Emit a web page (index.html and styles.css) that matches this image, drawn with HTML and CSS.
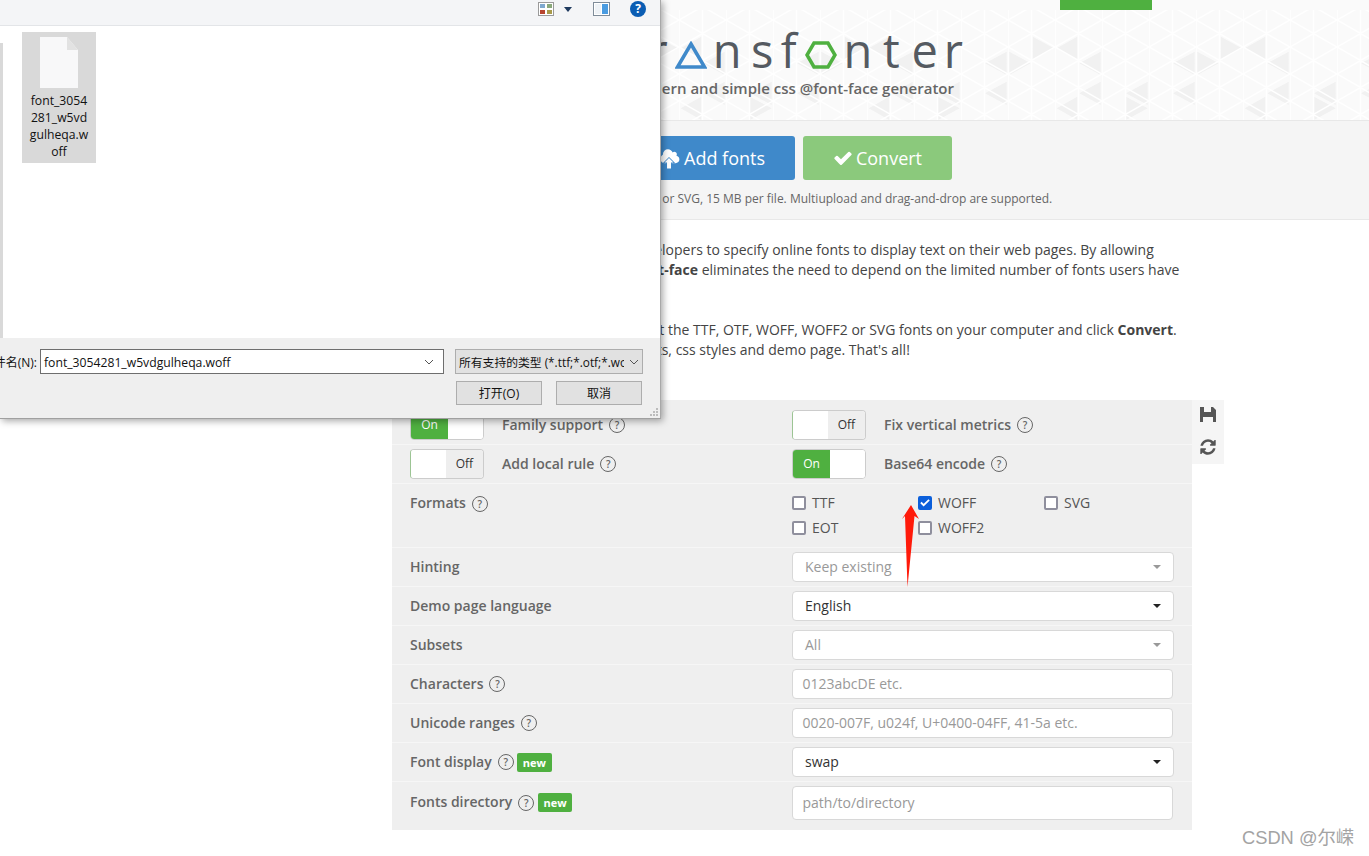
FILE: index.html
```html
<!DOCTYPE html>
<html lang="en">
<head>
<meta charset="utf-8">
<title>Transfonter</title>
<link rel="stylesheet" href="styles.css">
</head>
<body>
<header class="hero">
  <svg class="hero-bg" width="100%" height="120" aria-hidden="true">
    <defs>
      <pattern id="lattice" width="47" height="27" patternUnits="userSpaceOnUse" x="21" y="20">
        <path d="M0 0V27M23.500 0V27M0 0L23.500 13.500L47 0M0 27L23.500 13.500L47 27" fill="none" stroke="#fff" stroke-width="1.500"/>
      </pattern>
      <pattern id="shades" width="188" height="120" patternUnits="userSpaceOnUse" x="960" y="0">
        <path fill="#f1f1f1" d="M25 63.300L46.700 51.700V75ZM49.300 51.700V75L70.700 63.300ZM72.700 36.700V60L94 48.300ZM96.700 48.300L117.300 36.700V60ZM119.300 63.300L140.700 51.700V75ZM25 93.300L46.700 81.700V105ZM96.700 108.300L117.300 96.700V120ZM119.300 93.300L140.700 81.700V105ZM166 93.300L187.700 81.700V105ZM166 96.700V120L187.700 108.300Z"/>
      </pattern>
    </defs>
    <rect width="100%" height="120" fill="url(#shades)"/>
    <rect width="100%" height="120" fill="url(#lattice)"/>
    <rect width="100%" height="10" fill="#fafafa"/>
  </svg>
  <div class="nav-tab"></div>
  <div class="brand">
    <div class="logo">
      <span class="logo-t">t</span><span class="logo-r">r</span>
      <svg class="logo-tri" width="32" height="28" viewBox="0 0 32 28"><path d="M16 3L29.500 26H2.500Z" fill="none" stroke="#3f89ca" stroke-width="3.500"/></svg>
      <span class="logo-n">n</span><span class="logo-s">s</span><span class="logo-f">f</span>
      <svg class="logo-hex" width="32" height="28" viewBox="0 0 32 28"><path d="M9 2H23L30 14L23 26H9L2 14Z" fill="none" stroke="#4fb040" stroke-width="3.500"/></svg>
      <span class="logo-n2">n</span><span class="logo-e-t">t</span><span class="logo-e">e</span><span class="logo-last">r</span>
    </div>
    <p class="tagline">A modern and simple css @font-face generator</p>
  </div>
</header>

<section class="actions">
  <div class="buttons">
    <button class="btn btn-blue">
      <svg class="btn-ico" width="19" height="21" viewBox="0 0 19 21"><g transform="scale(.0099)"><path fill="#fff" d="M1856 1152q0 159-112.500 271.500t-271.500 112.500h-1088q-185 0-316.500-131.500t-131.500-316.500q0-130 70-240t188-165q-2-30-2-43 0-212 150-362t362-150q156 0 285.500 87t188.500 231q71-62 166-62 106 0 181 75t75 181q0 76-41 138 130 31 213.500 135.500t83.500 238.500z"/></g><path d="M8 10L12.500 14.500H10V20.500H6V14.500H3.500Z" fill="#fff" stroke="#3f89ca" stroke-width="1.500" paint-order="stroke"/></svg>
      Add fonts
    </button>
    <button class="btn btn-green">
      <svg class="btn-ico" width="20" height="20" viewBox="0 0 1792 1792"><path fill="#fff" d="M1671 566q0 40-28 68l-724 724-136 136q-28 28-68 28t-68-28l-136-136-362-362q-28-28-28-68t28-68l136-136q28-28 68-28t68 28l294 295 656-657q28-28 68-28t68 28l136 136q28 28 28 68z"/></svg>
      Convert
    </button>
  </div>
  <p class="hint">Upload TTF, OTF, WOFF, WOFF2 or SVG, 15 MB per file. Multiupload and drag-and-drop are supported.</p>
</section>

<main class="content">
  <div class="intro">
    <p class="line l1">The @font-face CSS rule allows web developers to specify online fonts to display text on their web pages. By allowing</p>
    <p class="line l2">authors to provide their own fonts, <b>@font-face</b> eliminates the need to depend on the limited number of fonts users have</p>
    <p class="line gap">installed on their computers.</p>
    <p class="line l3">Just select the TTF, OTF, WOFF, WOFF2 or SVG fonts on your computer and click <b>Convert</b>.</p>
    <p class="line l4">You will get converted fonts, css styles and demo page. That's all!</p>
  </div>

  <div class="options-wrap">
    <div class="options">
      <div class="row first">
        <div class="cell"><span class="toggle on"><i>On</i><em></em></span><span class="label wide">Family support</span><span class="help">?</span></div>
        <div class="cell"><span class="toggle off"><em></em><i>Off</i></span><span class="label wide">Fix vertical metrics</span><span class="help">?</span></div>
      </div>
      <div class="row">
        <div class="cell"><span class="toggle off"><em></em><i>Off</i></span><span class="label wide">Add local rule</span><span class="help">?</span></div>
        <div class="cell"><span class="toggle on"><i>On</i><em></em></span><span class="label wide">Base64 encode</span><span class="help">?</span></div>
      </div>
      <div class="row formats">
        <div class="cell top"><span class="label">Formats</span><span class="help">?</span></div>
        <div class="checks">
          <label class="check"><span class="box"></span>TTF</label>
          <label class="check"><span class="box checked"><svg width="11" height="9" viewBox="0 0 11 9"><path d="M1 4.500L4 7.500L10 1.500" fill="none" stroke="#fff" stroke-width="2"/></svg></span>WOFF</label>
          <label class="check"><span class="box"></span>SVG</label>
          <label class="check"><span class="box"></span>EOT</label>
          <label class="check"><span class="box"></span>WOFF2</label>
        </div>
      </div>
      <div class="row">
        <div class="cell"><span class="label">Hinting</span></div>
        <div class="select muted">Keep existing<span class="caret"></span></div>
      </div>
      <div class="row">
        <div class="cell"><span class="label">Demo page language</span></div>
        <div class="select">English<span class="caret dark"></span></div>
      </div>
      <div class="row">
        <div class="cell"><span class="label">Subsets</span></div>
        <div class="select muted">All<span class="caret"></span></div>
      </div>
      <div class="row">
        <div class="cell"><span class="label">Characters</span><span class="help">?</span></div>
        <div class="input">0123abcDE etc.</div>
      </div>
      <div class="row">
        <div class="cell"><span class="label">Unicode ranges</span><span class="help">?</span></div>
        <div class="input">0020-007F, u024f, U+0400-04FF, 41-5a etc.</div>
      </div>
      <div class="row">
        <div class="cell"><span class="label">Font display</span><span class="help">?</span><span class="badge tight">new</span></div>
        <div class="select">swap<span class="caret dark"></span></div>
      </div>
      <div class="row last">
        <div class="cell"><span class="label">Fonts directory</span><span class="help">?</span><span class="badge">new</span></div>
        <div class="input tall">path/to/directory</div>
      </div>
    </div>
    <aside class="side">
      <svg width="16" height="15" viewBox="0 0 16 15"><path fill="#555" d="M0 0H4V5H11V0H13L16 3V15H13V10H3V15H0Z"/></svg>
      <svg width="18" height="18" viewBox="0 0 1792 1792"><path fill="#555" d="M1639 1056q0 5-1 7-64 268-268 434.500t-478 166.500q-146 0-282.500-55t-243.500-157l-129 129q-19 19-45 19t-45-19-19-45v-448q0-26 19-45t45-19h448q26 0 45 19t19 45-19 45l-137 137q71 66 161 102t187 36q134 0 250-65t186-179q11-17 53-117 8-23 30-23h192q13 0 22.500 9.500t9.500 22.500zm25-800v448q0 26-19 45t-45 19h-448q-26 0-45-19t-19-45 19-45l138-138q-148-137-349-137-134 0-250 65t-186 179q-11 17-53 117-8 23-30 23h-199q-13 0-22.500-9.500t-9.500-22.500v-7q65-268 270-434.500t480-166.500q146 0 284 55.500t245 156.500l130-129q19-19 45-19t45 19 19 45z"/></svg>
    </aside>
  </div>
</main>

<svg class="arrow" width="24" height="90" viewBox="0 0 24 90" aria-hidden="true"><path d="M11 1L19 15L14.500 12L7.500 83L5 12L2 15Z" fill="#ff1a0a"/></svg>

<div class="watermark">CSDN @尔嵘</div>

<div class="dialog">
  <div class="dlg-toolbar">
    <svg class="tb-grid" width="16" height="14" viewBox="0 0 16 14"><rect x=".5" y=".5" width="15" height="13" fill="#fff" stroke="#9a9a9a"/><rect x="2" y="2" width="5" height="4" fill="#7fa9cf"/><rect x="9" y="2" width="5" height="4" fill="#8aa87a"/><rect x="2" y="8" width="5" height="4" fill="#b8452f"/><rect x="9" y="8" width="5" height="4" fill="#a89a4a"/></svg>
    <span class="tb-caret"></span>
    <svg class="tb-panel" width="17" height="14" viewBox="0 0 17 14"><rect x=".5" y=".5" width="16" height="13" fill="#fff" stroke="#7f8c99"/><rect x="9" y="2" width="6" height="10" fill="#4a9be0"/><rect x="2" y="2" width="6" height="10" fill="#eef2f6"/></svg>
    <span class="tb-help">?</span>
  </div>
  <div class="dlg-body">
    <div class="dlg-rail"></div>
    <div class="file">
      <svg width="38" height="51" viewBox="0 0 38 51"><path d="M0 0H27L38 13V51H0Z" fill="#f8f8f9"/><path d="M27 0L38 13H27Z" fill="#e2e2e2"/></svg>
      <span class="file-name">font_3054<br>281_w5vd<br>gulheqa.w<br>off</span>
    </div>
  </div>
  <div class="dlg-foot">
    <div class="dlg-line">
      <span class="dlg-label"><span>文件名(N):</span></span>
      <div class="dlg-input"><span class="dlg-value">font_3054281_w5vdgulheqa.woff</span><svg width="10" height="6" viewBox="0 0 10 6"><path d="M1 1L5 5L9 1" fill="none" stroke="#555"/></svg></div>
      <div class="dlg-select"><span class="dlg-select-text">所有支持的类型 (*.ttf;*.otf;*.woff;*.woff2;*.svg)</span><svg width="10" height="6" viewBox="0 0 10 6"><path d="M1 1L5 5L9 1" fill="none" stroke="#555"/></svg></div>
    </div>
    <div class="dlg-btns">
      <button class="dlg-btn">打开(O)</button>
      <button class="dlg-btn">取消</button>
    </div>
    <svg class="grip" width="10" height="10" viewBox="0 0 10 10"><path d="M7 1h2v2H7zM4 4h2v2H4zM7 4h2v2H7zM1 7h2v2H1zM4 7h2v2H4zM7 7h2v2H7z" fill="#bcbcbc"/></svg>
  </div>
</div>
</body>
</html>
```

FILE: styles.css
```css
* { box-sizing: border-box; }
html, body { margin: 0; padding: 0; }
body {
  width: 1369px;
  height: 856px;
  overflow: hidden;
  position: relative;
  background: #fff;
  font-family: "Open Sans", "Noto Sans CJK SC", sans-serif;
  font-size: 14px;
  color: #444;
}
p { margin: 0; }

.hero {
  position: relative;
  height: 121px;
  background: #fafafa;
  border-bottom: 1px solid #e8e8e8;
  overflow: hidden;
}
.hero-bg { position: absolute; left: 0; top: 0; }
.nav-tab {
  position: absolute;
  left: 1060px;
  top: 0;
  width: 92px;
  height: 10px;
  background: #4fb040;
}
.brand {
  position: relative;
  display: flex;
  flex-direction: column;
  align-items: flex-end;
  width: 963px;
  padding-top: 25px;
}
.logo {
  display: flex;
  align-items: flex-end;
  height: 50px;
  font-size: 47px;
  line-height: 50px;
  color: #555a61;
  font-weight: 400;
}
.logo span { display: block; }
.logo-t { margin-right: 14px; }
.logo-tri { margin: 0 6px 6px 7px; }
.logo-n { margin-right: 9.400px; }
.logo-s { margin-right: 7.300px; }
.logo-f { margin-right: 9px; }
.logo-hex { margin: 0 6px 6px 0; }
.logo-n2 { margin-right: 10.800px; }
.logo-e-t { margin-right: 11.500px; }
.logo-e { margin-right: 6px; }
.tagline {
  margin-top: 3px;
  padding-right: 9px;
  font-size: 15px;
  font-weight: 600;
  line-height: 20px;
  color: #666;
  white-space: nowrap;
}

.actions {
  height: 99px;
  background: #f5f5f5;
  border-bottom: 1px solid #e8e8e8;
  padding-top: 15px;
}
.buttons {
  display: flex;
  gap: 8px;
  padding-left: 640px;
}
.btn {
  display: flex;
  align-items: center;
  justify-content: center;
  gap: 3px;
  height: 44px;
  border: 0;
  border-radius: 3px;
  color: #fff;
  font: 18px "Open Sans", sans-serif;
}
.btn-blue { width: 155px; background: #3f89ca; justify-content: flex-end; gap: 4px; padding-right: 30px; }
.btn-green { width: 149px; background: #8bc97c; }
.hint {
  margin-top: 11px;
  font-size: 12px;
  line-height: 16px;
  color: #666;
  white-space: nowrap;
  padding-left: 483px;
}

.content { padding: 20px 0 0 392px; }
.intro { height: 160px; font-size: 14px; line-height: 20px; color: #444; }
.line { white-space: nowrap; }
.l1 { margin-left: 4px; }
.l2 { margin-left: -1px; }
.gap { margin-bottom: 20px; }
.l3 { margin-left: 207px; }
.l4 { margin-left: 96px; }

.options-wrap { display: flex; align-items: flex-start; }
.options {
  width: 800px;
  background: #efefef;
  padding-top: 5px;
}
.side {
  width: 32px;
  height: 64px;
  background: #f5f5f5;
  display: flex;
  flex-direction: column;
  align-items: center;
  gap: 16px;
  padding-top: 7px;
}
.row {
  display: grid;
  grid-template-columns: 382px 382px;
  align-items: center;
  height: 39px;
  padding-left: 18px;
  border-top: 1px solid #f6f6f6;
}
.row.first { border-top: 0; padding-top: 1px; }
.row.formats { height: 64px; align-items: start; padding-top: 8px; }
.row.last { height: 49px; align-items: start; padding-top: 4px; }
.row.last .cell { padding-top: 6px; }
.cell { display: flex; align-items: center; }
.cell.top { padding-top: 1px; }
.label { font-weight: 600; font-size: 14px; color: #666; padding-bottom: 2px; }
.label.wide { margin-left: 18px; }
.help {
  display: inline-flex;
  align-items: center;
  justify-content: center;
  width: 16px;
  height: 16px;
  margin-left: 6px;
  border: 1.500px solid #666;
  border-radius: 50%;
  color: #666;
  font-size: 10px;
  font-weight: 600;
  line-height: 1;
}
.badge {
  margin-left: 4px;
  width: 34px;
  height: 19px;
  border-radius: 2px;
  background: #4fb040;
  color: #fff;
  font-size: 11px;
  font-weight: 700;
  line-height: 19px;
  text-align: center;
}
.badge.tight { margin-left: 3px; width: 35px; }

.toggle {
  display: flex;
  width: 74px;
  height: 30px;
  border: 1px solid #ccc;
  border-radius: 4px;
  overflow: hidden;
  font-size: 12px;
  line-height: 28px;
  background: #fff;
}
.toggle i { font-style: normal; text-align: center; }
.toggle em { display: block; flex: 1; background: #fff; }
.toggle.on i { width: 37px; background: #4fb040; color: #fff; }
.toggle.off i { width: 37px; background: #eee; color: #333; }
.toggle.off { border-left-color: #9cc494; }

.checks {
  display: grid;
  grid-template-columns: 126px 126px 125px;
  row-gap: 5px;
}
.check {
  display: flex;
  align-items: center;
  height: 20px;
  color: #555;
  font-size: 14px;
}
.box {
  display: flex;
  align-items: center;
  justify-content: center;
  width: 14px;
  height: 14px;
  margin: 1px 6px 0 0;
  border: 2px solid #8f8f9d;
  border-radius: 2px;
  background: #fff;
}
.box.checked { background: #0b5fdb; border-color: #0b5fdb; }

.select, .input {
  position: relative;
  width: 382px;
  height: 30px;
  border: 1px solid #d8d8d8;
  border-radius: 4px;
  background: #fff;
  padding-left: 12px;
  line-height: 28px;
  font-size: 14px;
  color: #333;
}
.select.muted { color: #999; }
.input { width: 381px; padding-left: 9.500px; color: #999; }
.input.tall { height: 34px; line-height: 32px; }
.caret {
  position: absolute;
  right: 12px;
  top: 12px;
  border-left: 4px solid transparent;
  border-right: 4px solid transparent;
  border-top: 4px solid #999;
}
.caret.dark { border-top-color: #222; }

.arrow { position: absolute; left: 900px; top: 504px; }
.watermark {
  position: absolute;
  left: 1242px;
  top: 826px;
  font: 18.300px/24px "Liberation Sans", "Noto Sans CJK SC", sans-serif;
  color: #a3a3a3;
}

.dialog {
  position: absolute;
  left: 0;
  top: 0;
  width: 661px;
  height: 419px;
  display: flex;
  flex-direction: column;
  background: #efefef;
  border-right: 1px solid #a8a8a8;
  border-bottom: 1px solid #a0a0a0;
  box-shadow: 2px 2px 7px rgba(0, 0, 0, .35);
}
.dlg-toolbar {
  height: 26px;
  background: #f4f5f7;
  border-bottom: 1px solid #e3e5e8;
  display: flex;
  align-items: center;
  padding-left: 538px;
  padding-bottom: 8px;
}
.tb-caret {
  margin: 2px 0 0 10px;
  border-left: 4px solid transparent;
  border-right: 4px solid transparent;
  border-top: 5px solid #1f3a5f;
}
.tb-panel { margin-left: 21px; }
.tb-help {
  width: 16px;
  height: 16px;
  margin-left: 20px;
  border-radius: 50%;
  background: #0a5db3;
  color: #fff;
  font-size: 12px;
  font-weight: 700;
  line-height: 16px;
  text-align: center;
}
.dlg-body {
  position: relative;
  height: 312px;
  background: #fff;
  padding: 6px 0 0 22px;
}
.dlg-rail {
  position: absolute;
  left: 0;
  top: 17px;
  bottom: 0;
  width: 3px;
  background: #d9d9d9;
}
.file {
  width: 74px;
  height: 131px;
  background: #d9d9d9;
  display: flex;
  flex-direction: column;
  align-items: center;
  padding-top: 5px;
}
.file-name {
  margin-top: 4px;
  font-size: 12.200px;
  line-height: 17px;
  color: #111;
  text-align: center;
}
.dlg-foot {
  position: relative;
  flex: 1;
  background: #efefef;
  padding: 11px 0 0 0;
  font-size: 12px;
  color: #111;
}
.dlg-line { display: flex; align-items: center; }
.dlg-label {
  width: 37px;
  margin-right: 3px;
  display: flex;
  justify-content: flex-end;
  white-space: nowrap;
  overflow: hidden;
}
.dlg-label span { flex: none; }
.dlg-input {
  display: flex;
  justify-content: space-between;
  align-items: center;
  width: 404px;
  height: 25px;
  margin-right: 11px;
  padding: 0 9px 0 3px;
  background: #fff;
  border: 1px solid #6e6e6e;
}
.dlg-value { font-size: 12.200px; padding-top: 1px; }
.dlg-select {
  display: flex;
  justify-content: space-between;
  align-items: center;
  width: 188px;
  height: 25px;
  padding: 0 3px 0 3px;
  background: #e1e1e1;
  border: 1px solid #adadad;
}
.dlg-select-text { width: 165px; overflow: hidden; white-space: nowrap; font-size: 11.800px; }
.dlg-btns {
  display: flex;
  gap: 14px;
  margin-top: 7px;
  padding-left: 456px;
}
.dlg-btn {
  width: 86px;
  height: 24px;
  padding: 0;
  background: #e1e1e1;
  border: 1px solid #adadad;
  color: #111;
  font: 12px "Open Sans", "Noto Sans CJK SC", sans-serif;
}
.grip { position: absolute; right: 1px; bottom: 1px; }
```
